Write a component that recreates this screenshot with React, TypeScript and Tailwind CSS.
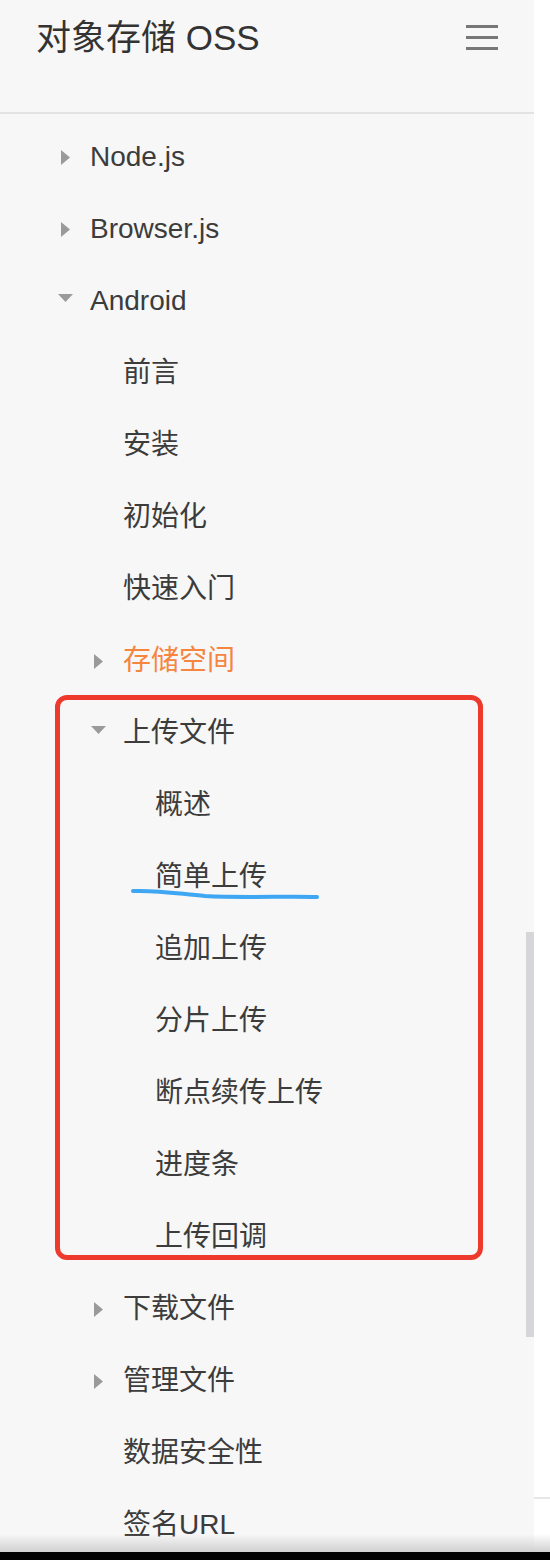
import React from "react";

type Item = { label: string; level: number; arrow?: "right" | "down"; active?: boolean };

const items: Item[] = [
  { label: "Node.js", level: 1, arrow: "right" },
  { label: "Browser.js", level: 1, arrow: "right" },
  { label: "Android", level: 1, arrow: "down" },
  { label: "前言", level: 2 },
  { label: "安装", level: 2 },
  { label: "初始化", level: 2 },
  { label: "快速入门", level: 2 },
  { label: "存储空间", level: 2, arrow: "right", active: true },
];

const uploadChildren = ["概述", "简单上传", "追加上传", "分片上传", "断点续传上传", "进度条", "上传回调"];

const after: Item[] = [
  { label: "下载文件", level: 2, arrow: "right" },
  { label: "管理文件", level: 2, arrow: "right" },
  { label: "数据安全性", level: 2 },
  { label: "签名URL", level: 2 },
];

function Arrow({ dir }: { dir?: "right" | "down" }) {
  if (!dir) return <span className="w-[30px] shrink-0" />;
  return (
    <span className="w-[30px] shrink-0 flex items-center">
      {dir === "right" ? (
        <svg width="10" height="15" viewBox="0 0 10 15" className="ml-[1px]">
          <path d="M0 0 L9 7.5 L0 15 Z" fill="#9a9a9a" />
        </svg>
      ) : (
        <svg width="15" height="9" viewBox="0 0 15 9" className="-ml-[2px] -mt-[6px]">
          <path d="M0 0 L15 0 L7.5 8 Z" fill="#9a9a9a" />
        </svg>
      )}
    </span>
  );
}

function Row({ item }: { item: Item }) {
  const pl = item.level === 1 ? "pl-[60px]" : item.level === 2 ? "pl-[93px]" : "pl-[125px]";
  return (
    <div className={`h-[72px] shrink-0 flex items-center ${pl}`}>
      <Arrow dir={item.arrow} />
      <span
        className={`text-[28px] leading-none ${item.active ? "text-[#f5853f]" : "text-[#3c3c3c]"}`}
      >
        {item.label}
      </span>
    </div>
  );
}

export default function App() {
  return (
    <div
      className="w-[550px] h-[1560px] bg-white relative overflow-hidden flex flex-col"
      style={{ fontFamily: '"Liberation Sans", "Noto Sans CJK SC", sans-serif' }}
    >
      <div className="flex flex-1 min-h-0">
        <div className="w-[534px] bg-[#f7f7f7] flex flex-col relative overflow-hidden">
          <div className="h-[114px] shrink-0 border-b-2 border-[#e3e3e3] flex items-start justify-between pl-[36px] pr-[36px] pt-[14px]">
            <span className="text-[35px] leading-[48px] text-[#333333]">对象存储 OSS</span>
            <div className="flex flex-col gap-[8px] mt-[11px]">
              <span className="block w-[32px] h-[3px] bg-[#777777]" />
              <span className="block w-[32px] h-[3px] bg-[#777777]" />
              <span className="block w-[32px] h-[3px] bg-[#777777]" />
            </div>
          </div>
          <div className="pt-[7px] flex flex-col shrink-0">
            {items.map((it) => (
              <Row key={it.label} item={it} />
            ))}
            <div className="relative shrink-0">
              <Row item={{ label: "上传文件", level: 2, arrow: "down" }} />
              {uploadChildren.map((c) => (
                <Row key={c} item={{ label: c, level: 3 }} />
              ))}
              <div className="absolute left-[55px] top-[-2px] w-[428px] h-[565px] border-[5px] border-[#ee3a2c] rounded-[12px] pointer-events-none" />
              <svg
                className="absolute left-0 top-0 pointer-events-none"
                width="534"
                height="520"
                viewBox="0 0 534 520"
              >
                <path
                  d="M133 194 C 160 193, 180 197, 205 199 C 240 201, 290 199, 317 200"
                  stroke="#3ea6f2"
                  strokeWidth="4"
                  fill="none"
                  strokeLinecap="round"
                />
              </svg>
            </div>
            {after.map((it) => (
              <Row key={it.label} item={it} />
            ))}
          </div>
          <div className="absolute left-[526px] top-[932px] w-[8px] h-[405px] bg-[#d6d6d8]" />
        </div>
        <div className="flex-1 bg-white flex flex-col">
          <div className="h-[1497px]" />
          <div className="h-[2px] bg-[#e6e6e6]" />
        </div>
      </div>
      <div className="absolute left-0 right-0 bottom-[8px] h-[18px] bg-gradient-to-b from-transparent to-[#d0d0d0] pointer-events-none" />
      <div className="h-[8px] bg-black shrink-0" />
    </div>
  );
}
